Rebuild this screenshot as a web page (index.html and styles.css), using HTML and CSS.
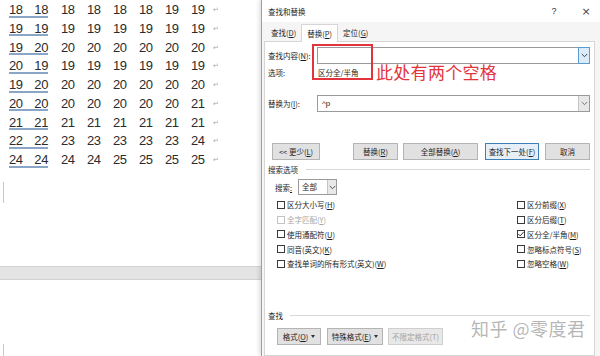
FILE: index.html
```html
<!DOCTYPE html>
<html lang="zh-CN">
<head>
    <meta charset="UTF-8">
    <title>查找和替换</title>
    <link rel="stylesheet" href="styles.css">
</head>
<body>
<div class="screen">
    <div class="doc">
        <div class="lines">
            <div class="line"><span class="u"><span>18</span><span>18</span></span><span class="n">18</span><span class="n">18</span><span class="n">18</span><span class="n">18</span><span class="n">19</span><span class="n">19</span><span class="ret">↵</span></div>
            <div class="line"><span class="u"><span>19</span><span>19</span></span><span class="n">19</span><span class="n">19</span><span class="n">19</span><span class="n">19</span><span class="n">19</span><span class="n">19</span><span class="ret">↵</span></div>
            <div class="line"><span class="u"><span>19</span><span>20</span></span><span class="n">20</span><span class="n">20</span><span class="n">20</span><span class="n">20</span><span class="n">20</span><span class="n">20</span><span class="ret">↵</span></div>
            <div class="line"><span class="u"><span>20</span><span>19</span></span><span class="n">19</span><span class="n">19</span><span class="n">19</span><span class="n">19</span><span class="n">19</span><span class="n">19</span><span class="ret">↵</span></div>
            <div class="line"><span class="u"><span>19</span><span>20</span></span><span class="n">20</span><span class="n">20</span><span class="n">20</span><span class="n">20</span><span class="n">20</span><span class="n">20</span><span class="ret">↵</span></div>
            <div class="line"><span class="u"><span>20</span><span>20</span></span><span class="n">20</span><span class="n">20</span><span class="n">20</span><span class="n">20</span><span class="n">20</span><span class="n">21</span><span class="ret">↵</span></div>
            <div class="line"><span class="u"><span>21</span><span>21</span></span><span class="n">21</span><span class="n">21</span><span class="n">21</span><span class="n">21</span><span class="n">21</span><span class="n">21</span><span class="ret">↵</span></div>
            <div class="line"><span class="u"><span>22</span><span>22</span></span><span class="n">23</span><span class="n">23</span><span class="n">23</span><span class="n">23</span><span class="n">23</span><span class="n">24</span><span class="ret">↵</span></div>
            <div class="line"><span class="u"><span>24</span><span>24</span></span><span class="n">24</span><span class="n">24</span><span class="n">25</span><span class="n">25</span><span class="n">25</span><span class="n">25</span><span class="ret">↵</span></div>
        </div>
        <div class="mark mark-a"></div>
        <div class="hbar"></div>
        <div class="mark mark-b"></div>
    </div>

    <div class="dialog">
        <div class="titlebar">
            <span class="title">查找和替换</span>
            <span class="help">?</span>
            <span class="close">×</span>
        </div>
        <div class="tabs">
            <span class="tab">查找(<u>D</u>)</span>
            <span class="tab active">替换(<u>P</u>)</span>
            <span class="tab">定位(<u>G</u>)</span>
        </div>
        <div class="panel">
            <div class="field">
                <span class="label">查找内容(<u>N</u>):</span>
                <div class="combo">
                    <span class="val"></span>
                    <span class="drop focus"><svg width="7" height="5" viewBox="0 0 7 5"><polyline points="0.8,1 3.5,3.7 6.2,1" fill="none" stroke="#444" stroke-width="1"/></svg></span>
                </div>
            </div>
            <div class="opts">
                <span class="label">选项:</span>
                <span class="opt-val">区分全/半角</span>
                <span class="note">此处有两个空格</span>
            </div>
            <div class="field field-replace">
                <span class="label">替换为(<u>I</u>):</span>
                <div class="combo">
                    <span class="val">^p</span>
                    <span class="drop"><svg width="7" height="5" viewBox="0 0 7 5"><polyline points="0.8,1 3.5,3.7 6.2,1" fill="none" stroke="#777" stroke-width="1"/></svg></span>
                </div>
            </div>
            <div class="btn-row">
                <span class="btn b-less">&lt;&lt; 更少(<u>L</u>)</span>
                <span class="btn b-rep">替换(<u>R</u>)</span>
                <span class="btn b-all">全部替换(<u>A</u>)</span>
                <span class="btn b-next focus">查找下一处(<u>F</u>)</span>
                <span class="btn b-cancel">取消</span>
            </div>
            <div class="section">
                <span>搜索选项</span>
                <span class="rule"></span>
            </div>
            <div class="search-row">
                <span class="search-label">搜索<u>:</u></span>
                <div class="select">
                    <span class="val">全部</span>
                    <span class="drop"><svg width="7" height="5" viewBox="0 0 7 5"><polyline points="0.8,1 3.5,3.7 6.2,1" fill="none" stroke="#555" stroke-width="1"/></svg></span>
                </div>
            </div>
            <div class="checks">
                <label class="check"><span class="box"></span>区分大小写(<u>H</u>)</label>
                <label class="check off"><span class="box"></span>全字匹配(<u>Y</u>)</label>
                <label class="check"><span class="box"></span>使用通配符(<u>U</u>)</label>
                <label class="check"><span class="box"></span>同音(英文)(<u>K</u>)</label>
                <label class="check"><span class="box"></span>查找单词的所有形式(英文)(<u>W</u>)</label>
                <label class="check"><span class="box"></span>区分前缀(<u>X</u>)</label>
                <label class="check"><span class="box"></span>区分后缀(<u>T</u>)</label>
                <label class="check"><span class="box"><svg width="8" height="8" viewBox="0 0 8 8"><polyline points="1.3,4 3.2,5.9 6.8,1.8" fill="none" stroke="#333" stroke-width="1"/></svg></span>区分全/半角(<u>M</u>)</label>
                <label class="check"><span class="box"></span>忽略标点符号(<u>S</u>)</label>
                <label class="check"><span class="box"></span>忽略空格(<u>W</u>)</label>
            </div>
            <div class="section section-find">
                <span>查找</span>
                <span class="rule"></span>
            </div>
            <div class="btn-row btn-row-bottom">
                <span class="btn b-fmt">格式(<u>O</u>) <i class="tri"></i></span>
                <span class="btn b-spec">特殊格式(<u>E</u>) <i class="tri"></i></span>
                <span class="btn b-nofmt off">不限定格式(T)</span>
            </div>
        </div>
    </div>

    <div class="redbox"></div>
    <div class="watermark">知乎 @零度君</div>
</div>
</body>
</html>
```

FILE: styles.css
```css
* {
    box-sizing: border-box;
    margin: 0;
    padding: 0;
}

body {
    background: #fff;
}

.screen {
    position: relative;
    display: flex;
    width: 600px;
    height: 356px;
    overflow: hidden;
    background: #fff;
}

u {
    text-decoration: underline;
    text-underline-offset: 1px;
}

/* documento */
.doc {
    width: 261px;
    display: flex;
    flex-direction: column;
    flex-shrink: 0;
}

.lines {
    padding-top: 1px;
    font-family: "Liberation Sans", Arial, sans-serif;
    font-size: 13px;
    letter-spacing: -0.4px;
    color: #2b2b2b;
}

.line {
    display: flex;
    height: 18.75px;
    line-height: 18.75px;
    padding-left: 9px;
}

.u {
    display: flex;
    justify-content: space-between;
    width: 39px;
    margin-right: 13px;
    background: linear-gradient(#8ba5c6, #8ba5c6) no-repeat 0 14.5px / 100% 2px;
}

.n {
    width: 26px;
}

.ret {
    margin-left: -4px;
    font-family: "DejaVu Sans", sans-serif;
    font-size: 7px;
    color: #a8a8a8;
}

.mark {
    width: 1px;
    margin-left: 3px;
    background: #c8c8c8;
}

.mark-a {
    height: 22px;
    margin-top: 12px;
}

.mark-b {
    height: 12px;
    margin-top: 64px;
}

.hbar {
    height: 14px;
    margin-top: 63px;
    background: #e4e4e4;
    border-top: 1px solid #d2d2d2;
    border-bottom: 1px solid #d2d2d2;
}

/* dialogo */
.dialog {
    flex: 1;
    display: flex;
    flex-direction: column;
    background: #f5f5f5;
    border-left: 1px solid #9e9e9e;
    box-shadow: -2px 0 4px rgba(0, 0, 0, 0.12);
    font-family: "Noto Sans CJK SC", "Liberation Sans", sans-serif;
    font-size: 7.5px;
    color: #1e1e1e;
}

.titlebar {
    height: 22px;
    display: flex;
    align-items: center;
    padding-left: 6px;
    background: #fff;
}

.help {
    margin-left: auto;
    width: 12px;
    margin-right: 20px;
    text-align: center;
    font-family: "Liberation Sans", sans-serif;
    font-size: 9px;
    color: #333;
}

.close {
    width: 12px;
    margin-right: 8px;
    text-align: center;
    font-family: "DejaVu Sans", sans-serif;
    font-size: 11px;
    color: #444;
}

.tabs {
    position: relative;
    z-index: 1;
    height: 19px;
    display: flex;
    align-items: flex-end;
    padding-left: 4px;
}

.tab {
    height: 16px;
    line-height: 16px;
    padding: 0 5px;
}

.tab.active {
    height: 18px;
    line-height: 17px;
    margin-bottom: -1px;
    background: #fff;
    border: 1px solid #d6d6d6;
    border-bottom: none;
}

.panel {
    flex: 1;
    margin: 0 5px 0 2px;
    padding: 0 4px 0 3px;
    background: #fff;
    border: 1px solid #d6d6d6;
    display: flex;
    flex-direction: column;
}

.field {
    display: flex;
    align-items: center;
    margin-top: 5px;
    height: 17px;
}

.field-replace {
    margin-top: 16px;
}

.label {
    width: 49px;
    flex-shrink: 0;
}

.combo {
    flex: 1;
    height: 17px;
    display: flex;
    border: 1px solid #9a9a9a;
    background: #fff;
}

.combo .val {
    flex: 1;
    padding-left: 4px;
    line-height: 15px;
    font-family: "Liberation Sans", sans-serif;
    font-size: 8px;
}

.drop {
    width: 11px;
    display: flex;
    align-items: center;
    justify-content: center;
    background: #e8e8e8;
    border-left: 1px solid #c4c4c4;
}

.drop.focus {
    background: #dcebf8;
    border: 1px solid #5b9bd3;
    margin: -1px -1px -1px 0;
    width: 12px;
}

.opts {
    display: flex;
    align-items: center;
    height: 14px;
    margin-top: 1px;
}

.opt-val {
    width: 59px;
    padding-left: 1px;
}

.note {
    font-size: 17px;
    line-height: 14px;
    color: #e2343c;
    letter-spacing: 0.3px;
}

.btn-row {
    display: flex;
    margin-top: 31px;
    padding-left: 4px;
}

.btn {
    height: 17px;
    display: flex;
    align-items: center;
    justify-content: center;
    background: #e1e1e1;
    border: 1px solid #b4b4b4;
}

.btn.focus {
    background: #e6eef7;
    border: 1px solid #3d80b8;
}

.btn.off {
    color: #a3a3a3;
    border-color: #cfcfcf;
    background: #e8e8e8;
}

.b-less { width: 48px; }
.b-rep { width: 45px; margin-left: 33px; }
.b-all { width: 75px; margin-left: 5px; }
.b-next { width: 54px; margin-left: 7px; }
.b-cancel { width: 45px; margin-left: 6px; }

.section {
    display: flex;
    align-items: center;
    height: 10px;
    margin-top: 4px;
}

.rule {
    flex: 1;
    height: 1px;
    margin-left: 8px;
    background: #d8d8d8;
}

.section-find {
    margin-top: 39.5px;
}

.section-find .rule {
    margin-left: 7px;
}

.search-row {
    display: flex;
    align-items: center;
    height: 16px;
    margin-top: 5px;
    padding-left: 7px;
}

.search-label {
    width: 23px;
}

.select {
    width: 39px;
    height: 16px;
    display: flex;
    border: 1px solid #9a9a9a;
    background: #fff;
}

.select .val {
    flex: 1;
    padding-left: 3px;
    line-height: 14px;
}

.select .drop {
    width: 9px;
}

.checks {
    display: grid;
    grid-template-columns: 240px 1fr;
    grid-template-rows: repeat(5, 14.75px);
    grid-auto-flow: column;
    margin-top: 2.6px;
    padding-left: 9px;
}

.check {
    display: flex;
    align-items: center;
}

.box {
    width: 8px;
    height: 8px;
    margin-right: 2px;
    border: 1px solid #3a3a3a;
    background: #fff;
    display: flex;
    align-items: center;
    justify-content: center;
}

.box svg {
    margin: -1px;
}

.check.off {
    color: #a6a6a6;
}

.check.off .box {
    border-color: #c4c4c4;
}

.btn-row-bottom {
    margin-top: 7px;
    padding-left: 9px;
}

.b-fmt { width: 44px; }
.b-spec { width: 56px; margin-left: 6px; }
.b-nofmt { width: 55px; margin-left: 5px; }

.tri {
    display: inline-block;
    margin-left: 3px;
    border-left: 2.5px solid transparent;
    border-right: 2.5px solid transparent;
    border-top: 3px solid #333;
}

/* sobreposicoes */
.redbox {
    position: absolute;
    left: 312px;
    top: 44px;
    width: 61px;
    height: 36px;
    border: 2px solid #e2343c;
}

.watermark {
    position: absolute;
    left: 471px;
    top: 316px;
    font-family: "Noto Sans CJK SC", sans-serif;
    font-size: 18px;
    line-height: 24px;
    color: rgba(150, 150, 150, 0.7);
    letter-spacing: 0.5px;
}
```
